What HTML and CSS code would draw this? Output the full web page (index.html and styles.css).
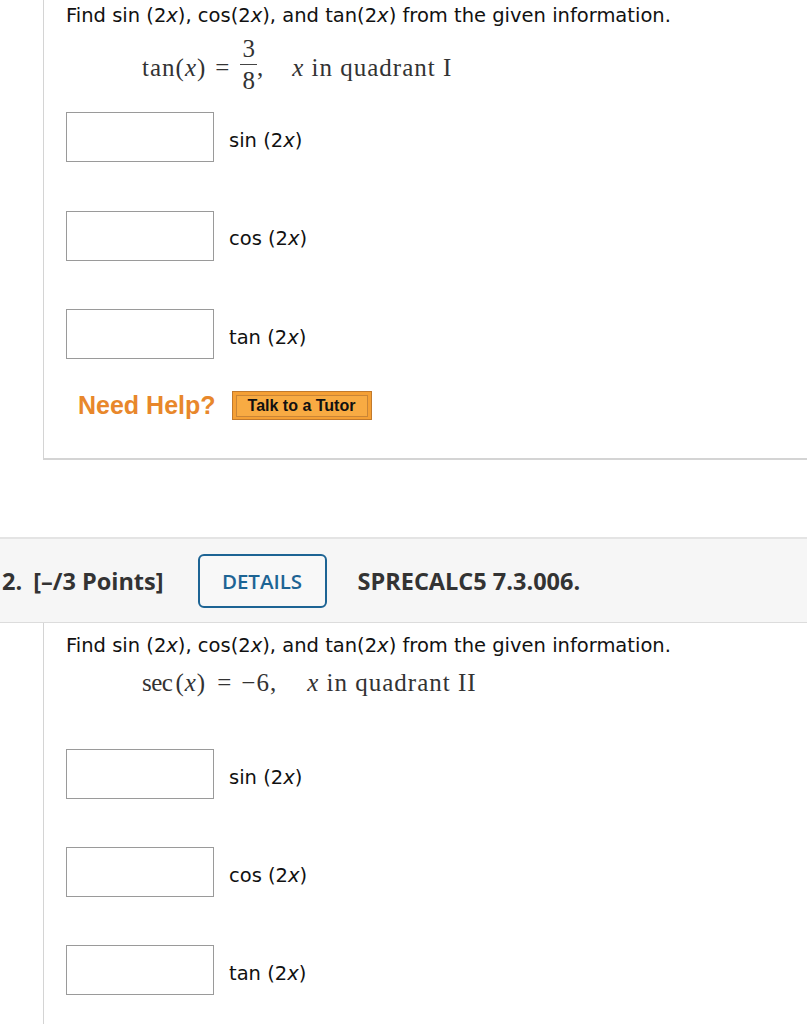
FILE: index.html
```html
<!DOCTYPE html>
<html>
<head>
<meta charset="utf-8">
<link rel="stylesheet" href="styles.css">
</head>
<body>
<div class="panel first">
  <p class="prompt">Find sin (2<i>x</i>), cos(2<i>x</i>), and tan(2<i>x</i>) from the given information.</p>
  <div class="math m1">tan(<i>x</i>)<span class="eq">=</span><span class="frac"><span class="num">3</span><span class="den">8</span></span>,<span class="sp"></span><i>x</i> in quadrant I</div>
  <div class="answers">
    <div class="row"><span class="box"></span><span class="lbl">sin (2<i>x</i>)</span></div>
    <div class="row"><span class="box"></span><span class="lbl">cos (2<i>x</i>)</span></div>
    <div class="row"><span class="box"></span><span class="lbl">tan (2<i>x</i>)</span></div>
  </div>
  <div class="help">
    <span class="need">Need Help?</span>
    <span class="tutor"><span class="tutor-in">Talk to a Tutor</span></span>
  </div>
</div>

<div class="qhead">
  <span class="qnum">2.</span>
  <span class="pts">[–/3 Points]</span>
  <span class="details">DETAILS</span>
  <span class="code">SPRECALC5 7.3.006.</span>
</div>

<div class="panel second">
  <p class="prompt">Find sin (2<i>x</i>), cos(2<i>x</i>), and tan(2<i>x</i>) from the given information.</p>
  <div class="math m2"><span class="fn">sec</span>(<i>x</i>)<span class="eq eq2">=</span>−6,<span class="sp sp2"></span><i>x</i> in quadrant II</div>
  <div class="answers">
    <div class="row"><span class="box"></span><span class="lbl">sin (2<i>x</i>)</span></div>
    <div class="row"><span class="box"></span><span class="lbl">cos (2<i>x</i>)</span></div>
    <div class="row"><span class="box"></span><span class="lbl">tan (2<i>x</i>)</span></div>
  </div>
</div>
</body>
</html>
```
FILE: styles.css
```css
html, body {
  margin: 0;
  padding: 0;
  background: #fff;
}
body {
  font-family: "DejaVu Sans", Verdana, sans-serif;
  color: #111;
  width: 807px;
  overflow: hidden;
}
.panel {
  margin-left: 43px;
  border-left: 1px solid #d4d4d4;
  padding-left: 22px;
}
.panel.first {
  border-bottom: 2px solid #d4d4d4;
  padding-top: 5px;
  height: 453px;
}
.panel.second {
  padding-top: 12px;
  height: 389px;
}
.prompt {
  margin: 0;
  font-size: 19.5px;
  line-height: 22px;
}
.math {
  font-family: "Liberation Serif", "Times New Roman", serif;
  font-size: 25px;
  letter-spacing: 1px;
  color: #333;
  padding-left: 76px;
  white-space: nowrap;
}
.m1 {
  margin-top: 9px;
  height: 60px;
  line-height: 60px;
}
.m2 {
  margin-top: 8px;
  height: 40px;
  line-height: 36px;
}
.fn {
  letter-spacing: -0.5px;
  margin-right: 3px;
}
.eq {
  display: inline-block;
  margin: 0 10px 0 9px;
}
.eq2 {
  margin: 0 9px 0 11px;
}
.frac {
  display: inline-block;
  vertical-align: -13px;
  line-height: 1;
  text-align: center;
  letter-spacing: 0;
}
.num {
  display: block;
  padding: 0 2px 3px;
  border-bottom: 1px solid #444;
}
.den {
  display: block;
  padding-top: 3px;
}
.sp {
  display: inline-block;
  width: 28px;
}
.sp2 {
  width: 30px;
}
.answers {
  display: flex;
  flex-direction: column;
  gap: 48.5px;
}
.first .answers {
  margin-top: 16px;
}
.second .answers {
  margin-top: 44px;
  gap: 48px;
}
.row {
  display: flex;
  align-items: center;
  gap: 15px;
}
.box {
  width: 146px;
  height: 48px;
  border: 1px solid #9a9a9a;
  background: #fff;
}
.lbl {
  font-size: 19.5px;
  padding-top: 6px;
}
.help {
  display: flex;
  align-items: center;
  margin-top: 31px;
  margin-left: 12px;
  gap: 16px;
  height: 30px;
}
.need {
  font-family: "Liberation Sans", Arial, sans-serif;
  font-weight: bold;
  font-size: 25px;
  color: #e8872b;
}
.tutor {
  display: inline-block;
  background: #f5a035;
  border: 1px solid #c27a2c;
  padding: 3px 3px 2px;
}
.tutor-in {
  display: block;
  border: 1px solid #c98537;
  background: #f8ab43;
  font-family: "Liberation Sans", Arial, sans-serif;
  font-weight: bold;
  font-size: 16px;
  color: #111;
  line-height: 20px;
  width: 130px;
  text-align: center;
}
.qhead {
  margin-top: 77px;
  height: 83px;
  background: #f6f6f6;
  border-top: 2px solid #e4e4e4;
  border-bottom: 1px solid #dcdcdc;
  display: flex;
  align-items: center;
  font-family: "Open Sans", sans-serif;
  font-weight: bold;
  font-size: 23.5px;
  color: #333;
  padding-left: 2px;
}
.pts {
  margin-left: 11px;
}
.details {
  margin-left: 34px;
  width: 125px;
  height: 50px;
  border: 2px solid #1d6494;
  border-radius: 6px;
  display: flex;
  align-items: center;
  justify-content: center;
  color: #1d6494;
  font-weight: 600;
  font-size: 20.5px;
  background: #f8f8f8;
}
.code {
  margin-left: 31px;
}
```
